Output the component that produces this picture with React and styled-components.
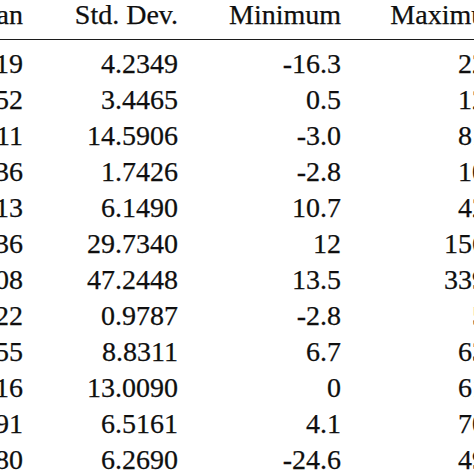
import React from "react";
import styled, { createGlobalStyle } from "styled-components";

const Global = createGlobalStyle`
  html, body {
    margin: 0;
    padding: 0;
    background: #ffffff;
    overflow: hidden;
  }
  body {
    width: 474px;
    height: 474px;
    font-family: "Liberation Serif", "Times New Roman", serif;
    color: #0f0f0f;
  }
`;

const Frame = styled.div`
  width: 474px;
  height: 474px;
  overflow: hidden;
`;

const Table = styled.div`
  margin-top: -3px;
  margin-left: -97px;
  width: 620px;
  font-size: 28px;
  font-variant-numeric: oldstyle-nums;
  -webkit-text-stroke: 0.25px #0f0f0f;
`;

const Row = styled.div`
  display: grid;
  grid-template-columns: 120px 155px 163px 166px;
  line-height: 36px;
`;

const HeadRow = styled(Row)`
  padding-bottom: 6px;
  border-bottom: 1.5px solid #1c1c1c;
  width: 620px;
`;

const Body = styled.div`
  padding-top: 6px;
`;

const Cell = styled.div`
  text-align: right;
  white-space: nowrap;
`;

const headers = ["Mean", "Std. Dev.", "Minimum", "Maximum"];

const rows = [
  ["2.3419", "4.2349", "-16.3", "22.8"],
  ["1.9252", "3.4465", "0.5", "12.4"],
  ["8.5711", "14.5906", "-3.0", "81.5"],
  ["1.0836", "1.7426", "-2.8", "10.2"],
  ["20.2113", "6.1490", "10.7", "42.1"],
  ["55.2636", "29.7340", "12", "156.0"],
  ["92.5108", "47.2448", "13.5", "339.5"],
  ["2.3322", "0.9787", "-2.8", "5.2"],
  ["21.8555", "8.8311", "6.7", "63.1"],
  ["30.8416", "13.0090", "0", "61.0"],
  ["25.2591", "6.5161", "4.1", "70.3"],
  ["2.8380", "6.2690", "-24.6", "49.7"],
];

export default function App() {
  return (
    <>
      <Global />
      <Frame>
        <Table>
          <HeadRow>
            {headers.map((h) => (
              <Cell key={h}>{h}</Cell>
            ))}
          </HeadRow>
          <Body>
            {rows.map((r, i) => (
              <Row key={i}>
                {r.map((v, j) => (
                  <Cell key={j}>{v}</Cell>
                ))}
              </Row>
            ))}
          </Body>
        </Table>
      </Frame>
    </>
  );
}
